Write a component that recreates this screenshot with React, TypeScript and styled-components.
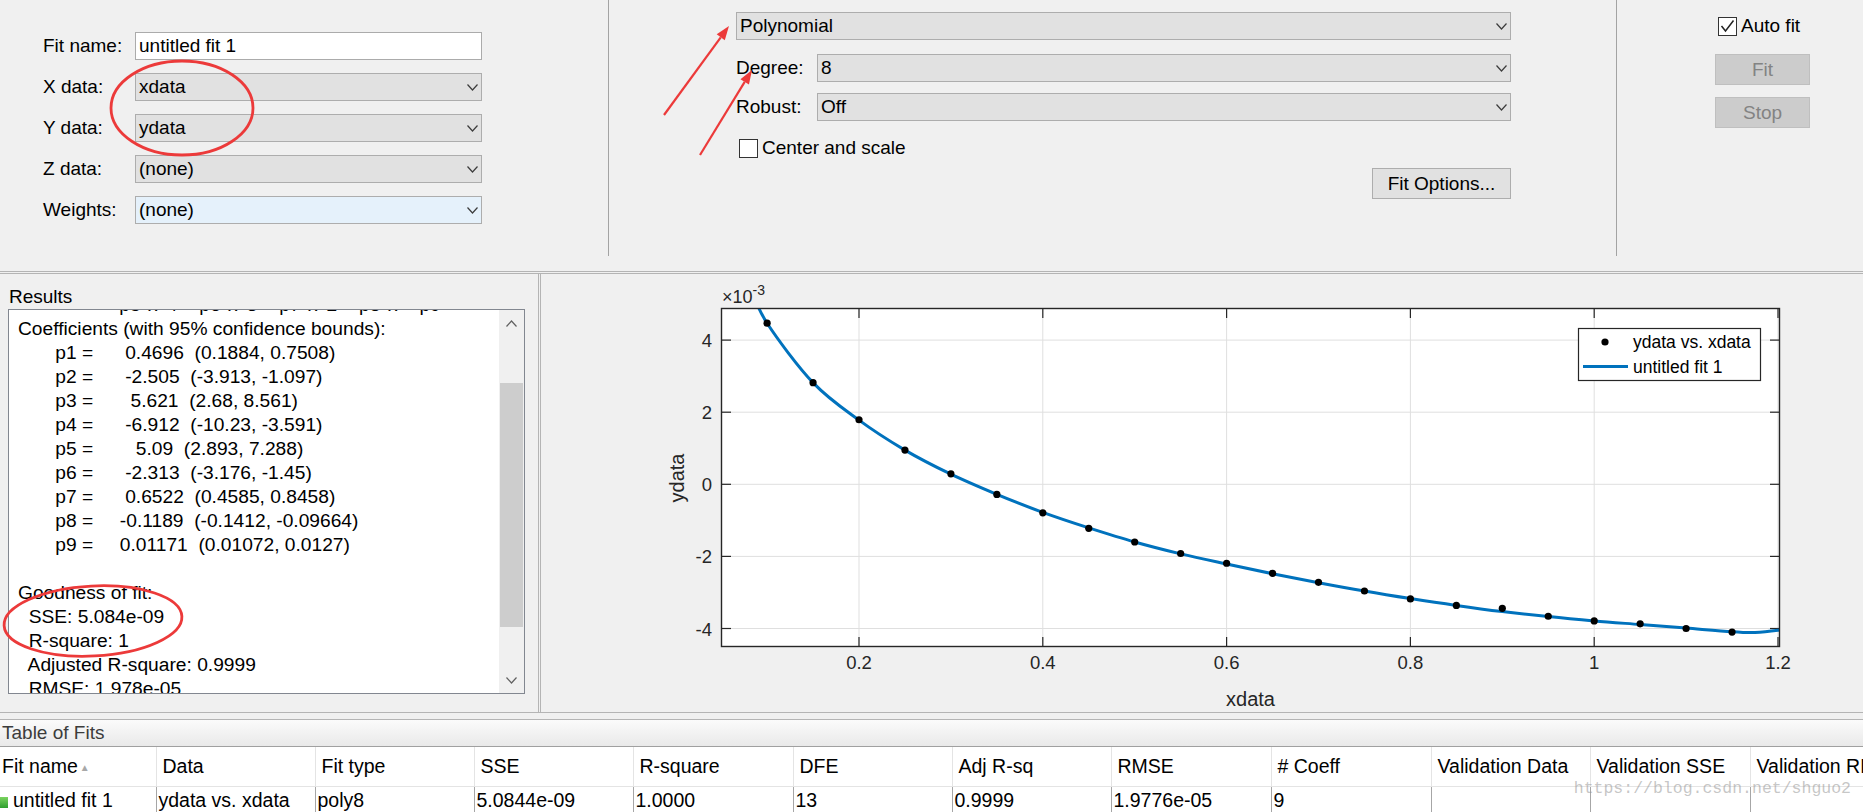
import React, { useLayoutEffect, useRef } from "react";
import styled, { createGlobalStyle } from "styled-components";

const GlobalStyle = createGlobalStyle`
  html, body {
    margin: 0;
    padding: 0;
    background: #f0f0f0;
    overflow: hidden;
  }
  body {
    font-family: "Liberation Sans", Arial, sans-serif;
    font-size: 19px;
    color: #000;
  }
`;

const Page = styled.div`
  position: relative;
  width: 1863px;
  height: 812px;
  display: flex;
  flex-direction: column;
  background: #f0f0f0;
  overflow: hidden;
`;

/* ---------- top settings panel ---------- */

const TopPanel = styled.div`
  height: 271px;
  display: flex;
  flex-shrink: 0;
`;

const VDivider = styled.div`
  width: 1px;
  height: 256px;
  background: #a3a3a3;
  flex-shrink: 0;
`;

const DataForm = styled.div`
  width: 608px;
  box-sizing: border-box;
  padding: 32px 0 0 43px;
  display: grid;
  grid-template-columns: 92px 347px;
  grid-auto-rows: 28px;
  row-gap: 13px;
  align-content: start;
`;

const Label = styled.div<{ $width?: number }>`
  display: flex;
  align-items: center;
  white-space: nowrap;
  ${(p) => (p.$width ? `width: ${p.$width}px; flex-shrink: 0;` : "")}
`;

type FieldKind = "input" | "select" | "focus";

const Field = styled.div<{ $kind: FieldKind; $width?: number }>`
  height: 28px;
  box-sizing: border-box;
  ${(p) => (p.$width ? `width: ${p.$width}px;` : "")}
  border: 1px solid ${(p) => (p.$kind === "input" ? "#ababab" : "#adadad")};
  background: ${(p) =>
    p.$kind === "input" ? "#ffffff" : p.$kind === "focus" ? "#e5f1fb" : "#e1e1e1"};
  display: flex;
  align-items: center;
  justify-content: space-between;
  padding: 0 3px 0 3px;
  white-space: nowrap;
`;

const FitPanel = styled.div`
  width: 1007px;
  box-sizing: border-box;
  padding: 12px 0 0 127px;
  display: flex;
  flex-direction: column;
`;

const FitColumn = styled.div`
  width: 775px;
  display: flex;
  flex-direction: column;
`;

const FieldRow = styled.div<{ $gap: number }>`
  display: flex;
  align-items: center;
  margin-top: ${(p) => p.$gap}px;
`;

const CheckRow = styled.label<{ $gap?: number }>`
  display: flex;
  align-items: center;
  gap: 4px;
  height: 20px;
  margin-top: ${(p) => p.$gap ?? 0}px;
  padding-left: 3px;
  white-space: nowrap;
`;

const Box = styled.span`
  width: 19px;
  height: 19px;
  box-sizing: border-box;
  border: 1px solid #333333;
  background: #ffffff;
  display: flex;
  align-items: center;
  justify-content: center;
`;

const ButtonRow = styled.div`
  display: flex;
  justify-content: flex-end;
  margin-top: 10px;
`;

const Button = styled.div<{ $disabled?: boolean; $width: number }>`
  width: ${(p) => p.$width}px;
  height: 31px;
  box-sizing: border-box;
  border: 1px solid ${(p) => (p.$disabled ? "#bfbfbf" : "#adadad")};
  background: ${(p) => (p.$disabled ? "#cccccc" : "#e1e1e1")};
  color: ${(p) => (p.$disabled ? "#838383" : "#000000")};
  display: flex;
  align-items: center;
  justify-content: center;
`;

const RunPanel = styled.div`
  flex: 1;
  padding: 16px 0 0 98px;
  display: flex;
  flex-direction: column;
`;

const RunButtons = styled.div`
  display: flex;
  flex-direction: column;
  gap: 12px;
  margin-top: 18px;
`;

/* ---------- splitters ---------- */

const HSplit = styled.div<{ $h: number }>`
  height: ${(p) => p.$h}px;
  box-sizing: border-box;
  border-top: 1px solid #b4b4b4;
  border-bottom: 1px solid #b4b4b4;
  flex-shrink: 0;
`;

const VSplit = styled.div`
  width: 3px;
  box-sizing: border-box;
  border-left: 1px solid #b4b4b4;
  border-right: 1px solid #b4b4b4;
  flex-shrink: 0;
`;

/* ---------- results + plot ---------- */

const Middle = styled.div`
  height: 438px;
  display: flex;
  flex-shrink: 0;
`;

const ResultsPanel = styled.div`
  width: 538px;
  box-sizing: border-box;
  padding: 10px 0 0 8px;
  display: flex;
  flex-direction: column;
`;

const PanelTitle = styled.div`
  height: 25px;
  line-height: 25px;
  padding-left: 1px;
`;

const ResultsBox = styled.div`
  width: 517px;
  height: 385px;
  box-sizing: border-box;
  border: 1px solid #828790;
  background: #ffffff;
  display: flex;
`;

const ResultsText = styled.div`
  flex: 1;
  overflow: hidden;
  padding-left: 9px;
  font-size: 19.2px;
  line-height: 24px;
  white-space: pre;
`;

const ResultsLine = styled.div`
  height: 24px;
`;

const ScrollBar = styled.div`
  width: 25px;
  background: #f0f0f0;
  display: flex;
  flex-direction: column;
`;

const ScrollArrow = styled.div`
  height: 26px;
  display: flex;
  align-items: center;
  justify-content: center;
  flex-shrink: 0;
`;

const ScrollTrack = styled.div`
  flex: 1;
  display: flex;
  flex-direction: column;
`;

const ScrollThumb = styled.div<{ $top: number; $height: number }>`
  margin: ${(p) => p.$top}px 1px 0 1px;
  height: ${(p) => p.$height}px;
  background: #cdcdcd;
`;

const PlotPanel = styled.div`
  flex: 1;
  display: flex;
`;

/* ---------- table of fits ---------- */

const TableBar = styled.div`
  height: 27px;
  box-sizing: border-box;
  background: linear-gradient(#fbfbfb, #e9e9e9);
  border-bottom: 1px solid #a0a0a0;
  color: #3c3c3c;
  padding-left: 2px;
  display: flex;
  align-items: center;
  flex-shrink: 0;
`;

const TableWrap = styled.div`
  flex: 1;
  background: #ffffff;
  overflow: hidden;
`;

const Table = styled.table`
  table-layout: fixed;
  border-collapse: collapse;
  width: 1863px;
  font-size: 19.5px;
`;

const HeadCell = styled.th`
  height: 39px;
  padding: 0 0 0 6px;
  text-align: left;
  font-weight: normal;
  white-space: nowrap;
  overflow: hidden;
  border-right: 1px solid #e4e4e4;
  border-bottom: 1px solid #e4e4e4;
  &:first-child {
    padding-left: 2px;
  }
`;

const SortMark = styled.span`
  color: #a8a8a8;
  font-size: 10px;
  margin-left: 2px;
  vertical-align: 2px;
`;

const Cell = styled.td`
  height: 30px;
  padding: 0 0 0 2px;
  white-space: nowrap;
  overflow: hidden;
  border-right: 1px solid #a6a6a6;
  vertical-align: top;
  line-height: 26px;
  &:first-child {
    padding-left: 0;
  }
`;

const FitIcon = styled.span`
  display: inline-block;
  width: 8px;
  height: 11px;
  margin-right: 5px;
  vertical-align: -1px;
  background: linear-gradient(#7ad35f, #2f9e2f);
`;

const Watermark = styled.div`
  position: absolute;
  right: 12px;
  top: 779px;
  font-family: "Liberation Mono", "DejaVu Sans Mono", monospace;
  font-size: 16.5px;
  color: rgba(150, 150, 150, 0.55);
  pointer-events: none;
`;

const Overlay = styled.svg`
  position: absolute;
  left: 0;
  top: 0;
  pointer-events: none;
`;

/* ---------- data ---------- */

const Chevron = ({ up = false, color = "#3c3c3c" }: { up?: boolean; color?: string }) => (
  <svg width="11" height="7" viewBox="0 0 11 7">
    <polyline
      points={up ? "0.5,6.5 5.5,1 10.5,6.5" : "0.5,0.5 5.5,6 10.5,0.5"}
      fill="none"
      stroke={color}
      strokeWidth="1.2"
    />
  </svg>
);

const Check = () => (
  <svg width="15" height="14" viewBox="0 0 15 14">
    <polyline points="1.5,7 5.5,12 13.5,1.5" fill="none" stroke="#222" strokeWidth="1.5" />
  </svg>
);

const coeffs: [string, string, string][] = [
  ["p1", "0.4696", "(0.1884, 0.7508)"],
  ["p2", "-2.505", "(-3.913, -1.097)"],
  ["p3", "5.621", "(2.68, 8.561)"],
  ["p4", "-6.912", "(-10.23, -3.591)"],
  ["p5", "5.09", "(2.893, 7.288)"],
  ["p6", "-2.313", "(-3.176, -1.45)"],
  ["p7", "0.6522", "(0.4585, 0.8458)"],
  ["p8", "-0.1189", "(-0.1412, -0.09664)"],
  ["p9", "0.01171", "(0.01072, 0.0127)"],
];

const resultLines = [
  "Linear model Poly8:",
  "     f(x) = p1*x^8 + p2*x^7 + p3*x^6 + p4*x^5 + ",
  "                   p5*x^4 + p6*x^3 + p7*x^2 + p8*x + p9",
  "Coefficients (with 95% confidence bounds):",
  ...coeffs.map(([n, v, b]) => `       ${n} =${" ".repeat(12 - v.length)}${v}  ${b}`),
  "",
  "Goodness of fit:",
  "  SSE: 5.084e-09",
  "  R-square: 1",
  "  Adjusted R-square: 0.9999",
  "  RMSE: 1.978e-05",
  "",
];

const columns: [string, number][] = [
  ["Fit name", 156],
  ["Data", 159],
  ["Fit type", 159],
  ["SSE", 159],
  ["R-square", 160],
  ["DFE", 159],
  ["Adj R-sq", 159],
  ["RMSE", 160],
  ["# Coeff", 160],
  ["Validation Data", 159],
  ["Validation SSE", 160],
  ["Validation RMSE", 113],
];

const rowValues = ["ydata vs. xdata", "poly8", "5.0844e-09", "1.0000", "13", "0.9999", "1.9776e-05", "9", "", "", ""];

// plot mapping (panel coords, y values in units of 1e-3)
const X = (v: number) => 318 + (v - 0.2) * 919;
const Y = (v: number) => 210.3 - 36.05 * v;
const AX = { left: 180, right: 1239, top: 34, bottom: 373 };

const points: [number, number][] = [
  [0.1, 4.47], [0.15, 2.82], [0.2, 1.79], [0.25, 0.95], [0.3, 0.29], [0.35, -0.28],
  [0.4, -0.79], [0.45, -1.22], [0.5, -1.6], [0.55, -1.92], [0.6, -2.19], [0.65, -2.47],
  [0.7, -2.72], [0.75, -2.96], [0.8, -3.18], [0.85, -3.36], [0.9, -3.44], [0.95, -3.66],
  [1.0, -3.79], [1.05, -3.87], [1.1, -4.0], [1.15, -4.1],
];

const curve: [number, number][] = [
  [0.082, 5.45], [0.1, 4.47], [0.15, 2.82], [0.2, 1.78], [0.25, 0.95], [0.3, 0.28],
  [0.35, -0.28], [0.4, -0.78], [0.45, -1.21], [0.5, -1.6], [0.55, -1.93], [0.6, -2.21],
  [0.65, -2.48], [0.7, -2.73], [0.75, -2.96], [0.8, -3.17], [0.85, -3.36], [0.9, -3.53],
  [0.95, -3.67], [1.0, -3.79], [1.05, -3.89], [1.1, -3.99], [1.15, -4.09], [1.175, -4.11],
  [1.2, -4.05], [1.215, -3.98],
];

function smoothPath(pts: [number, number][]) {
  const p = pts.map(([a, b]) => [X(a), Y(b)]);
  let d = `M${p[0][0].toFixed(1)},${p[0][1].toFixed(1)}`;
  for (let i = 0; i < p.length - 1; i++) {
    const p0 = p[i - 1] || p[i];
    const p1 = p[i];
    const p2 = p[i + 1];
    const p3 = p[i + 2] || p2;
    const c1x = p1[0] + (p2[0] - p0[0]) / 6;
    const c1y = p1[1] + (p2[1] - p0[1]) / 6;
    const c2x = p2[0] - (p3[0] - p1[0]) / 6;
    const c2y = p2[1] - (p3[1] - p1[1]) / 6;
    d += ` C${c1x.toFixed(1)},${c1y.toFixed(1)} ${c2x.toFixed(1)},${c2y.toFixed(1)} ${p2[0].toFixed(1)},${p2[1].toFixed(1)}`;
  }
  return d;
}

const xTicks = [0.2, 0.4, 0.6, 0.8, 1, 1.2];
const yTicks = [4, 2, 0, -2, -4];

function FitPlot() {
  const axisColor = "#262626";
  const font = "Liberation Sans, Arial, sans-serif";
  return (
    <svg width="1322" height="438" viewBox="0 0 1322 438">
      <defs>
        <clipPath id="axesClip">
          <rect x={AX.left} y={AX.top} width={AX.right - AX.left} height={AX.bottom - AX.top} />
        </clipPath>
      </defs>
      <rect x={AX.left} y={AX.top} width={AX.right - AX.left} height={AX.bottom - AX.top} fill="#fff" />
      {xTicks.map((t) => (
        <line key={`gx${t}`} x1={X(t)} x2={X(t)} y1={AX.top} y2={AX.bottom} stroke="#dfdfdf" strokeWidth="1" />
      ))}
      {yTicks.map((t) => (
        <line key={`gy${t}`} x1={AX.left} x2={AX.right} y1={Y(t)} y2={Y(t)} stroke="#dfdfdf" strokeWidth="1" />
      ))}
      {xTicks.map((t) => (
        <g key={`tx${t}`} stroke={axisColor} strokeWidth="1.2">
          <line x1={X(t)} x2={X(t)} y1={AX.bottom} y2={AX.bottom - 10} />
          <line x1={X(t)} x2={X(t)} y1={AX.top} y2={AX.top + 10} />
        </g>
      ))}
      {yTicks.map((t) => (
        <g key={`ty${t}`} stroke={axisColor} strokeWidth="1.2">
          <line x1={AX.left} x2={AX.left + 10} y1={Y(t)} y2={Y(t)} />
          <line x1={AX.right} x2={AX.right - 10} y1={Y(t)} y2={Y(t)} />
        </g>
      ))}
      <g clipPath="url(#axesClip)">
        <path d={smoothPath(curve)} fill="none" stroke="#0072bd" strokeWidth="3" />
        {points.map(([a, b]) => (
          <circle key={a} cx={X(a)} cy={Y(b)} r="3.6" fill="#000" />
        ))}
      </g>
      <rect
        x={AX.left + 0.5}
        y={AX.top + 0.5}
        width={AX.right - AX.left - 1}
        height={AX.bottom - AX.top - 1}
        fill="none"
        stroke={axisColor}
        strokeWidth="1.4"
      />
      <g fontFamily={font} fontSize="18.5" fill={axisColor}>
        {xTicks.map((t) => (
          <text key={`lx${t}`} x={X(t)} y={395} textAnchor="middle">
            {String(t)}
          </text>
        ))}
        {yTicks.map((t) => (
          <text key={`ly${t}`} x={171} y={Y(t) + 7} textAnchor="end">
            {String(t)}
          </text>
        ))}
      </g>
      <text x={181} y={29} fontFamily={font} fontSize="18" fill={axisColor}>
        ×10
        <tspan fontSize="14" dy="-8">-3</tspan>
      </text>
      <text x={709.5} y={432} textAnchor="middle" fontFamily={font} fontSize="20" fill={axisColor}>
        xdata
      </text>
      <text
        x={0}
        y={0}
        transform="translate(143 204) rotate(-90)"
        textAnchor="middle"
        fontFamily={font}
        fontSize="20"
        fill={axisColor}
      >
        ydata
      </text>
      <g>
        <rect x={1037.5} y={54.5} width={182} height={52} fill="#fff" stroke={axisColor} strokeWidth="1.2" />
        <circle cx={1064} cy={68} r="3.6" fill="#000" />
        <line x1={1042} x2={1087} y1={92.5} y2={92.5} stroke="#0072bd" strokeWidth="3" />
        <g fontFamily={font} fontSize="17.5" fill="#000">
          <text x={1092} y={74}>ydata vs. xdata</text>
          <text x={1092} y={99}>untitled fit 1</text>
        </g>
      </g>
    </svg>
  );
}

function Arrow({ x1, y1, x2, y2 }: { x1: number; y1: number; x2: number; y2: number }) {
  const a = Math.atan2(y2 - y1, x2 - x1);
  const len = 14;
  const w = 5;
  const bx = x2 - len * Math.cos(a);
  const by = y2 - len * Math.sin(a);
  const px = -Math.sin(a) * w;
  const py = Math.cos(a) * w;
  return (
    <g>
      <line x1={x1} y1={y1} x2={bx} y2={by} stroke="#ec3a3a" strokeWidth="2.2" />
      <polygon points={`${x2},${y2} ${bx + px},${by + py} ${bx - px},${by - py}`} fill="#ec3a3a" />
    </g>
  );
}

export default function App() {
  const textRef = useRef<HTMLDivElement>(null);

  useLayoutEffect(() => {
    if (textRef.current) textRef.current.scrollTop = 65;
  }, []);

  return (
    <>
      <GlobalStyle />
      <Page>
        <TopPanel>
          <DataForm>
            <Label>Fit name:</Label>
            <Field $kind="input">untitled fit 1</Field>
            <Label>X data:</Label>
            <Field $kind="select">
              xdata
              <Chevron />
            </Field>
            <Label>Y data:</Label>
            <Field $kind="select">
              ydata
              <Chevron />
            </Field>
            <Label>Z data:</Label>
            <Field $kind="select">
              (none)
              <Chevron />
            </Field>
            <Label>Weights:</Label>
            <Field $kind="focus">
              (none)
              <Chevron />
            </Field>
          </DataForm>
          <VDivider />
          <FitPanel>
            <FitColumn>
              <Field $kind="select" $width={775}>
                Polynomial
                <Chevron />
              </Field>
              <FieldRow $gap={14}>
                <Label $width={81}>Degree:</Label>
                <Field $kind="select" $width={694}>
                  8
                  <Chevron />
                </Field>
              </FieldRow>
              <FieldRow $gap={11}>
                <Label $width={81}>Robust:</Label>
                <Field $kind="select" $width={694}>
                  Off
                  <Chevron />
                </Field>
              </FieldRow>
              <CheckRow $gap={17}>
                <Box />
                Center and scale
              </CheckRow>
              <ButtonRow>
                <Button $width={139}>Fit Options...</Button>
              </ButtonRow>
            </FitColumn>
          </FitPanel>
          <VDivider />
          <RunPanel>
            <CheckRow>
              <Box>
                <Check />
              </Box>
              Auto fit
            </CheckRow>
            <RunButtons>
              <Button $disabled $width={95}>
                Fit
              </Button>
              <Button $disabled $width={95}>
                Stop
              </Button>
            </RunButtons>
          </RunPanel>
        </TopPanel>

        <HSplit $h={3} />

        <Middle>
          <ResultsPanel>
            <PanelTitle>Results</PanelTitle>
            <ResultsBox>
              <ResultsText ref={textRef}>
                {resultLines.map((l, i) => (
                  <ResultsLine key={i}>{l}</ResultsLine>
                ))}
              </ResultsText>
              <ScrollBar>
                <ScrollArrow>
                  <Chevron up color="#606060" />
                </ScrollArrow>
                <ScrollTrack>
                  <ScrollThumb $top={47} $height={244} />
                </ScrollTrack>
                <ScrollArrow>
                  <Chevron color="#606060" />
                </ScrollArrow>
              </ScrollBar>
            </ResultsBox>
          </ResultsPanel>
          <VSplit />
          <PlotPanel>
            <FitPlot />
          </PlotPanel>
        </Middle>

        <HSplit $h={8} />
        <TableBar>Table of Fits</TableBar>
        <TableWrap>
          <Table>
            <colgroup>
              {columns.map(([name, w]) => (
                <col key={name} style={{ width: w }} />
              ))}
            </colgroup>
            <thead>
              <tr>
                {columns.map(([name], i) => (
                  <HeadCell key={name}>
                    {name}
                    {i === 0 && <SortMark>▲</SortMark>}
                  </HeadCell>
                ))}
              </tr>
            </thead>
            <tbody>
              <tr>
                <Cell>
                  <FitIcon />
                  untitled fit 1
                </Cell>
                {rowValues.map((v, i) => (
                  <Cell key={i}>{v}</Cell>
                ))}
              </tr>
            </tbody>
          </Table>
        </TableWrap>

        <Watermark>https://blog.csdn.net/shguo2</Watermark>

        <Overlay width="1863" height="812" viewBox="0 0 1863 812">
          <ellipse cx="182" cy="108" rx="71" ry="47" fill="none" stroke="#ec3a3a" strokeWidth="2.8" />
          <ellipse
            cx="93"
            cy="621"
            rx="89"
            ry="35"
            fill="none"
            stroke="#ec3a3a"
            strokeWidth="2.8"
            transform="rotate(-3 93 621)"
          />
          <Arrow x1={664} y1={115} x2={729} y2={26} />
          <Arrow x1={700} y1={155} x2={752} y2={70} />
        </Overlay>
      </Page>
    </>
  );
}
